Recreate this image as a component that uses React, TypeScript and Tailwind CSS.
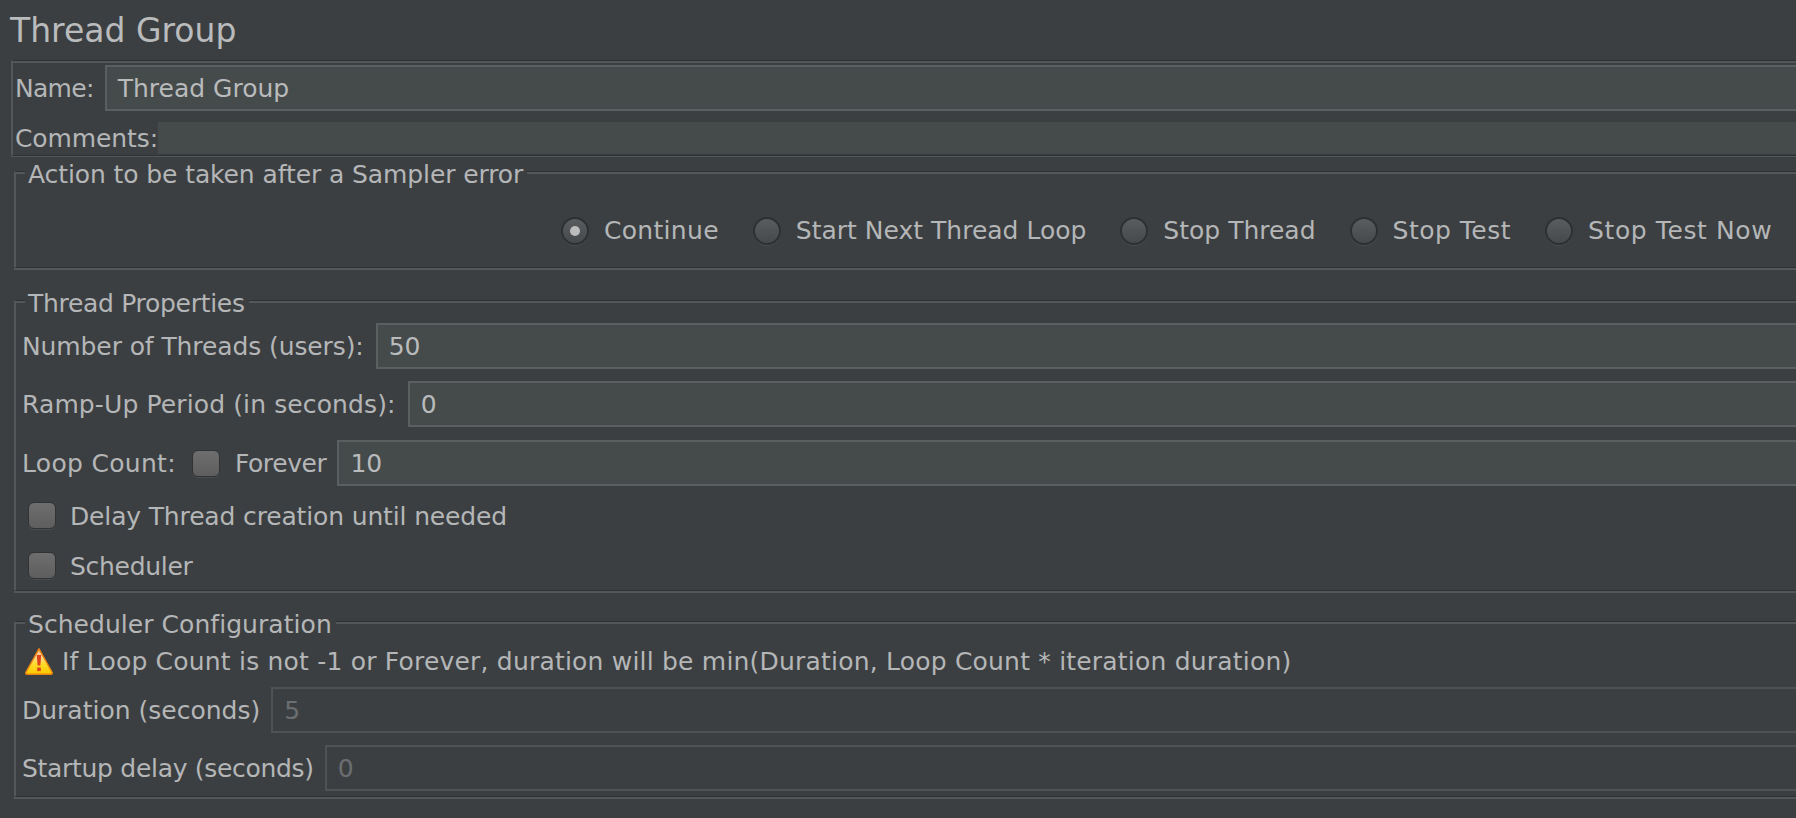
import React from 'react';

const Field = ({ value, disabled, className = '' }: { value: string; disabled?: boolean; className?: string }) => (
  <div
    className={`-mr-[4px] flex h-[46px] flex-1 items-center border-2 pl-[11px] pt-[2px] ${
      disabled ? 'border-[#4f5254] bg-[#3c3f41] text-[#6b6e70]' : 'border-[#5c5f61] bg-[#454a4a] text-[#b9bbbc]'
    } ${className}`}
  >
    {value}
  </div>
);

const Radio = ({ label, checked, className = '' }: { label: string; checked?: boolean; className?: string }) => (
  <div className="flex items-center gap-[15px]">
    <div className="flex h-[28px] w-[28px] items-center justify-center rounded-full border-2 border-[#2e3032] bg-gradient-to-b from-[#5a5d5f] to-[#46494b] shadow-[0_1px_0_#4a4d4f]">
      {checked && <div className="h-[10px] w-[10px] rounded-full bg-[#bcbcbc]" />}
    </div>
    <span className={className}>{label}</span>
  </div>
);

const Check = () => (
  <div className="h-[27px] w-[28px] shrink-0 rounded-[6px] border border-[#303234] bg-gradient-to-b from-[#6e6e6e] to-[#5e5e5e] shadow-[0_1px_0_#4a4d4f]" />
);

const Group = ({ title, className = '', legendClass = '', children }: { title: string; className?: string; legendClass?: string; children: React.ReactNode }) => (
  <fieldset className={`ml-[14px] border-t border-b border-l-2 border-r-0 border-[#2f3133] border-l-[#54575a] shadow-[inset_0_2px_0_#54575a,0_2px_0_#54575a] ${className}`}>
    <legend className={`ml-[9px] h-[28px] bg-[#3c3f41] pl-[3px] pr-[4px] leading-[36px] ${legendClass}`}>{title}</legend>
    {children}
  </fieldset>
);

const WarningIcon = () => (
  <svg width="28" height="27" viewBox="0 0 28 27" className="shrink-0">
    <defs>
      <linearGradient id="warn" x1="0" y1="0" x2="0" y2="1">
        <stop offset="0" stopColor="#f0b070" />
        <stop offset="0.3" stopColor="#ffd9a0" />
        <stop offset="0.6" stopColor="#ffdc2a" />
        <stop offset="1" stopColor="#ffc800" />
      </linearGradient>
    </defs>
    <path d="M14 0.8 L27.2 24.5 Q27.6 26.2 26 26.2 L2 26.2 Q0.4 26.2 0.8 24.5 Z" fill="url(#warn)" stroke="#e8830f" strokeWidth="1.4" />
    <path d="M11.8 7 H16.2 L15.4 17.5 H12.6 Z" fill="#e0431a" />
    <rect x="12.2" y="19.5" width="3.6" height="3.6" fill="#e0431a" />
  </svg>
);

export default function App() {
  return (
    <div className="h-[818px] w-[1796px] overflow-hidden bg-[#3c3f41] font-['DejaVu_Sans',sans-serif] text-[25px] text-[#b4b6b7]">
      <h1 className="flex h-[60px] items-center pl-[10px] text-[33px] leading-none text-[#b9bbbc]">Thread Group</h1>

      <div className="ml-[11px] h-[96px] border-y border-l-2 border-[#2f3133] border-l-[#54575a] pt-[4px] shadow-[inset_0_2px_0_#54575a,0_1px_0_#54575a]">
        <div className="flex h-[46px] items-center gap-[11px] pl-[2px]">
          <span className="pt-[2px] tracking-[-0.7px]">Name:</span>
          <Field value="Thread Group" />
        </div>
        <div className="mt-[11px] flex h-[32px] items-center pl-[2px]">
          <span className="pt-[2px] tracking-[-0.1px]">Comments:</span>
          <div className="h-[32px] flex-1 bg-[#454a4a]" />
        </div>
      </div>

      <Group title="Action to be taken after a Sampler error" legendClass="tracking-[-0.1px]" className="mt-[1px] h-[111px]">
        <div className="flex h-[82px] items-center gap-[34px] pl-[545px] pt-[10px]">
          <Radio label="Continue" className="tracking-[0.3px]" checked />
          <Radio label="Start Next Thread Loop" />
          <Radio label="Stop Thread" />
          <Radio label="Stop Test" className="tracking-[0.5px]" />
          <Radio label="Stop Test Now" className="tracking-[0.6px]" />
        </div>
      </Group>

      <Group title="Thread Properties" legendClass="tracking-[-0.3px]" className="mt-[18px] h-[305px]">
        <div className="flex flex-col pl-[6px]">
          <div className="mt-[9px] flex items-center gap-[12px]">
            <span className="pt-[2px] tracking-[-0.1px]">Number of Threads (users):</span>
            <Field value="50" />
          </div>
          <div className="mt-[12px] flex items-center gap-[12px]">
            <span className="pt-[2px] tracking-[0.12px]">Ramp-Up Period (in seconds):</span>
            <Field value="0" />
          </div>
          <div className="mt-[13px] flex items-center">
            <span className="pt-[2px] tracking-[0.3px]">Loop Count:</span>
            <div className="ml-[16px]"><Check /></div>
            <span className="ml-[15px] pt-[2px] tracking-[-0.4px]">Forever</span>
            <Field value="10" className="ml-[11px]" />
          </div>
          <div className="ml-[6px] mt-[16px] flex h-[27px] items-center gap-[14px]">
            <Check />
            <span className="pt-[2px] tracking-[-0.15px]">Delay Thread creation until needed</span>
          </div>
          <div className="ml-[6px] mt-[23px] flex h-[27px] items-center gap-[14px]">
            <Check />
            <span className="pt-[2px] tracking-[-0.3px]">Scheduler</span>
          </div>
        </div>
      </Group>

      <Group title="Scheduler Configuration" legendClass="tracking-[0.05px]" className="mt-[16px] h-[190px]">
        <div className="flex flex-col pl-[6px]">
          <div className="mt-[11px] flex h-[30px] items-center gap-[9px] pl-[3px]">
            <WarningIcon />
            <span className="pt-[2px] tracking-[0.2px]">If Loop Count is not -1 or Forever, duration will be min(Duration, Loop Count * iteration duration)</span>
          </div>
          <div className="mt-[11px] flex items-center gap-[11px]">
            <span className="pt-[2px]">Duration (seconds)</span>
            <Field value="5" disabled />
          </div>
          <div className="mt-[12px] flex items-center gap-[11px]">
            <span className="pt-[2px] tracking-[-0.3px]">Startup delay (seconds)</span>
            <Field value="0" disabled />
          </div>
        </div>
      </Group>
    </div>
  );
}
